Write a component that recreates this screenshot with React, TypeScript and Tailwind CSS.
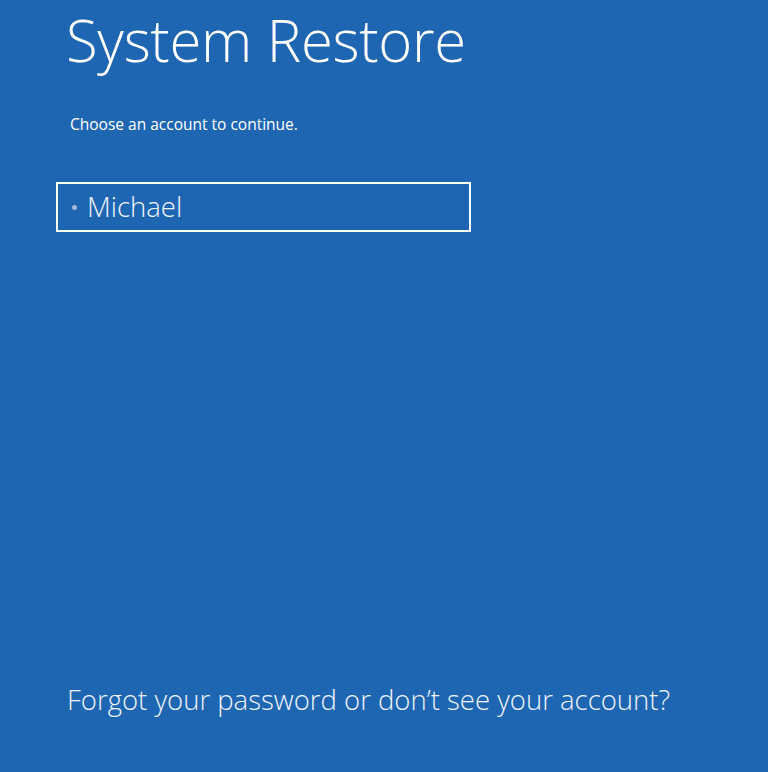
export default function App() {
  return (
    <div
      className="w-[768px] h-[772px] bg-[#1f66b2] text-white flex flex-col overflow-hidden"
      style={{ fontFamily: '"Open Sans", "Noto Sans", sans-serif' }}
    >
      <h1 className="ml-[66px] mt-0 text-[58px] font-light leading-[80px] tracking-[-0.3px]">
        System Restore
      </h1>
      <p className="ml-[70px] mt-[34px] text-[15.5px] leading-[20px]">Choose an account to continue.</p>
      <div className="ml-[56px] mt-[48px] w-[415px] h-[50px] border-2 border-white flex items-center">
        <span className="ml-[14px] w-[5px] h-[5px] rounded-full bg-[#9fb8d8]" />
        <span className="ml-[10px] text-[27.5px] font-light text-[#eef3fa] leading-[32px]">Michael</span>
      </div>
      <div className="flex-1" />
      <p className="ml-[67px] mb-[54px] text-[27.5px] font-light leading-[36px] text-[#eef3fa]">
        Forgot your password or don’t see your account?
      </p>
    </div>
  );
}
